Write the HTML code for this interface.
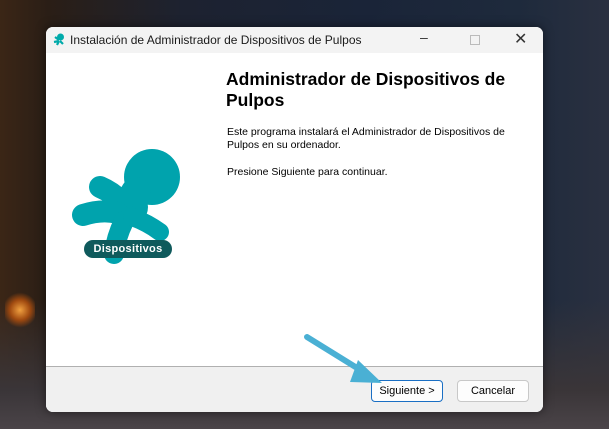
<!DOCTYPE html>
<html><head><meta charset="utf-8"><style>
body{margin:0;width:609px;height:429px;overflow:hidden;font-family:"Liberation Sans",sans-serif;
background:linear-gradient(90deg,#3b2616 0%,#2a1e16 8%,#1d2230 30%,#1a2438 60%,#1e2a3c 85%,#2a3040 100%);position:relative}
.bg2{position:absolute;left:0;top:300px;width:609px;height:129px;background:linear-gradient(180deg,rgba(0,0,0,0),#3a3538 70%,#4a4448)}
.fire{position:absolute;left:5px;top:290px;width:30px;height:40px;background:radial-gradient(circle,#f0a040 0%,#a04a10 40%,rgba(0,0,0,0) 70%)}
.win{position:absolute;left:46px;top:27px;width:497px;height:385px;background:#fff;border-radius:7px;overflow:hidden;box-shadow:0 0 10px rgba(0,0,0,.5)}
.title{height:26px;background:#f3f3f3;font-size:12px;color:#1a1a1a;position:relative}
.title span{position:absolute;left:24px;top:6px}
.ctl{position:absolute;top:3px;font-size:14px;color:#333}
.h{position:absolute;left:180px;top:42px;font-size:17.5px;font-weight:bold;line-height:21px;color:#000}
.p{position:absolute;left:181px;font-size:10.5px;line-height:13px;color:#000}
.foot{position:absolute;left:0;top:339px;width:497px;height:46px;background:#f0f0f0;border-top:1px solid #b0b0b0}
.btn{position:absolute;top:13px;height:20px;width:70px;border:1px solid #c8c8c8;border-radius:4px;background:#fdfdfd;font-size:11px;text-align:center;line-height:20px;color:#000}
.badge{position:absolute;left:38px;top:213px;width:88px;height:18px;border-radius:9px;background:#0f5a5c;color:#fff;font-weight:bold;font-size:11px;text-align:center;line-height:18px;letter-spacing:.3px}
</style></head><body>
<div class="bg2"></div><div class="fire"></div>
<div class="win">
<div class="title">
<svg style="position:absolute;left:7px;top:6px" width="12" height="13" viewBox="0 0 12 13"><circle cx="7.5" cy="4" r="3.5" fill="#0aa"/><path d="M2 4 L6 7 M1 9 L6 8 M4 12 L6 8 M10 11 L7 8" stroke="#0aa" stroke-width="2.2"/></svg>
<span>Instalación de Administrador de Dispositivos de Pulpos</span>
<div class="ctl" style="left:374px;top:2px">–</div>
<div style="position:absolute;left:424px;top:8px;width:8px;height:8px;border:1px solid #bbb"></div>
<div class="ctl" style="left:468px;top:2px;font-size:16px">✕</div>
</div>
<svg style="position:absolute;left:20px;top:110px" width="120" height="130" viewBox="0 0 120 130">
<g fill="#00a3ad" stroke="#00a3ad" stroke-linecap="round">
<circle cx="86" cy="40" r="28" stroke="none"/>
<circle cx="62" cy="70" r="20" stroke="none"/>
<path d="M70 55 L60 72" stroke-width="30" fill="none"/>
<path d="M34 50 Q48 56 56 66" stroke-width="22" fill="none"/>
<path d="M17 78 Q36 72 52 76" stroke-width="22" fill="none"/>
<path d="M48 117 Q50 100 58 84" stroke-width="20" fill="none"/>
<path d="M94 95 Q82 86 66 80" stroke-width="18" fill="none"/>
</g></svg>
<div class="badge">Dispositivos</div>
<div class="h">Administrador de Dispositivos de<br>Pulpos</div>
<div class="p" style="top:99px">Este programa instalará el Administrador de Dispositivos de<br>Pulpos en su ordenador.</div>
<div class="p" style="top:139px">Presione Siguiente para continuar.</div>
<div class="foot">
<div class="btn" style="left:325px;border-color:#1a6fc4">Siguiente &gt;</div>
<div class="btn" style="left:411px">Cancelar</div>
</div>
</div>
<svg style="position:absolute;left:300px;top:330px" width="90" height="60" viewBox="0 0 90 60">
<line x1="7" y1="7" x2="70" y2="46" stroke="#4ab0d4" stroke-width="6" stroke-linecap="round"/>
<path d="M58 30 L82 53 L50 52 Z" fill="#4ab0d4"/>
</svg>
</body></html>
